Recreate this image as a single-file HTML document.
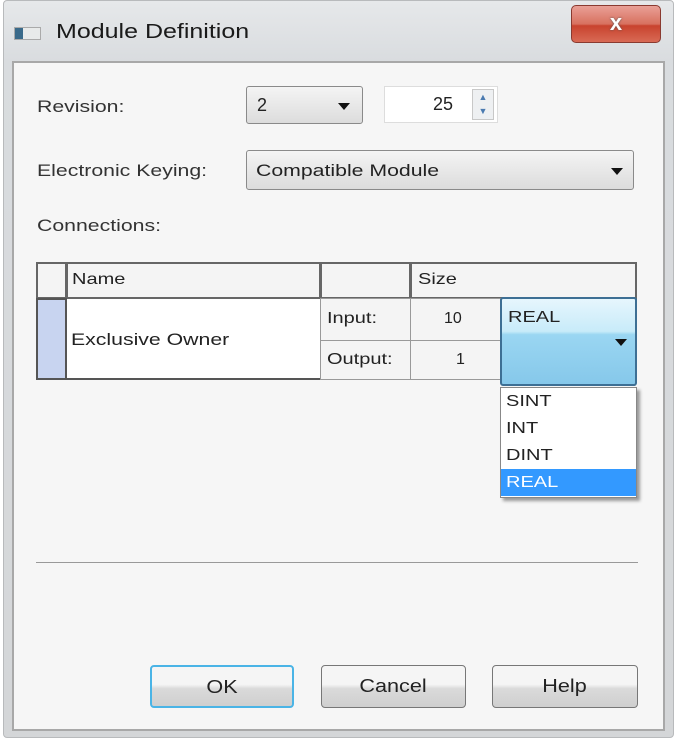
<!DOCTYPE html><html><head><style>
*{box-sizing:border-box;margin:0;padding:0}
body{width:696px;height:744px;background:#fff;position:relative;overflow:hidden;font-family:"Liberation Sans",sans-serif;color:#222}
.a{position:absolute}
.s{display:inline-block;transform:scaleX(1.25);transform-origin:left center;white-space:nowrap}
.sc{display:inline-block;transform:scaleX(1.2);transform-origin:center;white-space:nowrap}
.frame{left:3px;top:0;width:671px;height:738px;background:linear-gradient(#e6e8ea,#d9dcdf 60px,#d4d6d8);border:1px solid #b8babc;border-radius:4px}
.panel{left:12px;top:61px;width:653px;height:670px;background:#f6f6f6;border:2px solid #a8a8a8}
.lbl{font-size:17px;color:#333}
.box{border:1px solid #8a8a8a;border-radius:3px;background:linear-gradient(#f4f4f4,#dcdcdc)}
.tri{width:0;height:0;border-left:6px solid transparent;border-right:6px solid transparent;border-top:7px solid #111}
.btn{border:1px solid #777;border-radius:4px;background:linear-gradient(#f5f5f5 45%,#dadada 55%,#cfcfcf);font-size:18px;text-align:center;line-height:40px}
.cell{border:1px solid #666;font-size:16px}
</style></head><body>
<div class="a frame"></div>
<div class="a" style="left:14px;top:27px;width:27px;height:13px;background:#e8eaea;border:1px solid #aaa"><div style="width:8px;height:11px;background:#3a6a8a"></div></div>
<div class="a" style="left:56px;top:21px;font-size:20px;color:#1a1a1a"><span class="s">Module Definition</span></div>
<div class="a" style="left:571px;top:5px;width:90px;height:38px;border:1px solid #8a3a30;border-radius:5px;background:linear-gradient(#e9a097,#d8715f 50%,#c8432e 55%,#d86a55);color:#fff;font-size:22px;font-weight:bold;text-align:center;line-height:34px;text-shadow:0 0 2px #555">x</div>
<div class="a panel"></div>
<div class="a lbl" style="left:37px;top:97px"><span class="s">Revision:</span></div>
<div class="a box" style="left:246px;top:86px;width:117px;height:38px"><span class="a" style="left:10px;top:8px;font-size:18px">2</span><div class="a tri" style="left:91px;top:16px"></div></div>
<div class="a" style="left:384px;top:86px;width:114px;height:37px;background:#fff;border:1px solid #ddd"><span class="a" style="left:48px;top:7px;font-size:18px">25</span><div class="a" style="left:87px;top:2px;width:22px;height:31px;background:#eef0f2;border:1px solid #c8c8c8;font-size:9px;color:#4a7ab0;text-align:center;line-height:14px">▲<br>▼</div></div>
<div class="a lbl" style="left:37px;top:161px"><span class="s">Electronic Keying:</span></div>
<div class="a box" style="left:246px;top:150px;width:388px;height:40px"><span class="a" style="left:9px;top:10px;font-size:17px"><span class="s">Compatible Module</span></span><div class="a tri" style="left:364px;top:17px"></div></div>
<div class="a lbl" style="left:37px;top:216px"><span class="s">Connections:</span></div>
<div class="a" style="left:36px;top:262px;width:601px;height:118px;border:2px solid #555;background:#fff"></div>
<div class="a cell" style="left:36px;top:262px;width:31px;height:37px;background:#f4f4f4;border-width:2px"></div>
<div class="a cell" style="left:66px;top:262px;width:255px;height:37px;background:#f4f4f4;border-width:2px;padding:7px 4px"><span class="s">Name</span></div>
<div class="a cell" style="left:320px;top:262px;width:91px;height:37px;background:#f4f4f4;border-width:2px"></div>
<div class="a cell" style="left:410px;top:262px;width:227px;height:37px;background:#f4f4f4;border-width:2px;padding:7px 6px"><span class="s">Size</span></div>
<div class="a" style="left:36px;top:298px;width:31px;height:82px;background:#c8d4f0;border:2px solid #555"></div>
<div class="a" style="left:71px;top:330px;font-size:17px"><span class="s">Exclusive Owner</span></div>
<div class="a cell" style="left:320px;top:298px;width:91px;height:43px;background:#f4f4f4;border-color:#999;padding:11px 6px"><span class="s">Input:</span></div>
<div class="a cell" style="left:320px;top:340px;width:91px;height:40px;background:#f4f4f4;border-color:#999;padding:10px 6px"><span class="s">Output:</span></div>
<div class="a cell" style="left:410px;top:298px;width:91px;height:43px;background:#f4f4f4;border-color:#999;padding:11px 33px">10</div>
<div class="a cell" style="left:410px;top:340px;width:91px;height:40px;background:#f4f4f4;border-color:#999;padding:10px 45px">1</div>
<div class="a" style="left:500px;top:297px;width:137px;height:89px;border:2px solid #3d6f94;border-radius:3px;background:linear-gradient(#e6f6fd,#c8ebf9 38%,#9ad6f2 42%,#86c8ea)"><span class="a" style="left:6px;top:10px;font-size:16px"><span class="s">REAL</span></span><div class="a tri" style="left:113px;top:40px"></div></div>
<div class="a" style="left:500px;top:387px;width:137px;height:111px;background:#fff;border:1px solid #888;box-shadow:3px 3px 3px #999;font-size:16px;line-height:27px">
<div style="padding-left:5px"><span class="s">SINT</span></div><div style="padding-left:5px"><span class="s">INT</span></div><div style="padding-left:5px"><span class="s">DINT</span></div><div style="padding-left:5px;background:#3399ff;color:#fff"><span class="s">REAL</span></div></div>
<div class="a" style="left:36px;top:562px;width:602px;height:1px;background:#999"></div>
<div class="a btn" style="left:150px;top:665px;width:144px;height:43px;border:2px solid #4ab4e6"><span class="sc">OK</span></div>
<div class="a btn" style="left:321px;top:665px;width:145px;height:43px"><span class="sc">Cancel</span></div>
<div class="a btn" style="left:492px;top:665px;width:146px;height:43px"><span class="sc">Help</span></div>
</body></html>
